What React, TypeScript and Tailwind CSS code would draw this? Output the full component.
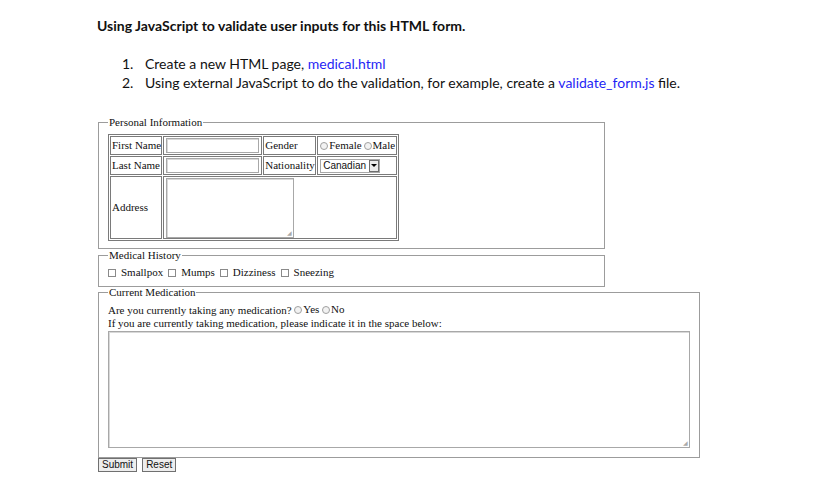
import React from "react"

const serif = { fontFamily: '"Liberation Serif", "Times New Roman", serif' }
const sans = { fontFamily: '"Liberation Sans", Arial, sans-serif' }

function Radio({ label }: { label: string }) {
  return (
    <span className="inline-flex items-center whitespace-nowrap">
      <span className="mr-[1px] inline-block h-[8px] w-[8px] rounded-full border border-[#a0a0a0] bg-[#f2f2f2]" />
      {label}
    </span>
  )
}

function Check({ label }: { label: string }) {
  return (
    <span className="mr-[5px] inline-flex items-center">
      <span className="mr-[5px] inline-block h-[8px] w-[8px] border border-[#8a8a8a] bg-white" />
      {label}
    </span>
  )
}

function TextBox() {
  return <span className="block h-[15px] w-[93px] border border-[#a8a8a8] bg-white shadow-[inset_1px_1px_0_#d8d8d8]" />
}

function Grip() {
  return <span className="absolute bottom-[1px] right-[1px] text-[6px] leading-none text-[#aaa]">◢</span>
}

export default function App() {
  const td = "whitespace-nowrap border border-[#7a7a7a] p-0 align-middle"
  return (
    <div className="min-h-[484px] w-[828px] bg-white pl-[97px] pt-[17px] text-[#111]">
      <h1 className="text-[14px] font-bold leading-[18px]" style={{ fontFamily: "Lato, sans-serif" }}>
        Using JavaScript to validate user inputs for this HTML form.
      </h1>

      <ol className="mt-[20px] space-y-[1px] text-[14px] leading-[18px]" style={{ fontFamily: "Lato, sans-serif" }}>
        <li className="flex">
          <span className="ml-[25px] w-[23px]">1.</span>
          <span>
            Create a new HTML page, <span className="text-[#1f1ff5]">medical.html</span>
          </span>
        </li>
        <li className="flex">
          <span className="ml-[25px] w-[23px]">2.</span>
          <span>
            Using external JavaScript to do the validation, for example, create a{" "}
            <span className="text-[#1f1ff5]">validate_form.js</span> file.
          </span>
        </li>
      </ol>

      <form className="mt-[24px] text-[11px] leading-[13px]" style={serif}>
        <fieldset className="ml-[1px] w-[507px] border border-[#9c9c9c] px-[9px] pb-[7px]">
          <legend className="px-[1px]">Personal Information</legend>
          <table className="mt-[5px] table-fixed border-separate border-spacing-[1px] border border-[#7a7a7a]">
            <tbody>
              <tr className="h-[19px]">
                <td className={td + " w-[50px] pl-[1px]"}>First Name</td>
                <td className={td + " w-[96px] px-[2px]"}>
                  <TextBox />
                </td>
                <td className={td + " w-[53px] pl-[1px]"}>Gender</td>
                <td className={td + " w-[80px] pl-[2px]"}>
                  <span className="flex gap-[2px]">
                    <Radio label="Female" />
                    <Radio label="Male" />
                  </span>
                </td>
              </tr>
              <tr className="h-[19px]">
                <td className={td + " pl-[1px]"}>Last Name</td>
                <td className={td + " px-[2px]"}>
                  <TextBox />
                </td>
                <td className={td + " pl-[1px]"}>Nationality</td>
                <td className={td + " pl-[2px]"}>
                  <span className="inline-flex h-[14px] items-center border border-[#a8a8a8] bg-white pl-[2px] text-[10px]" style={sans}>
                    Canadian
                    <span className="ml-[3px] flex h-[12px] w-[10px] items-center justify-center border border-[#6e6e6e] bg-[#ececec]">
                      <span className="border-x-[3px] border-t-[3px] border-x-transparent border-t-black" />
                    </span>
                  </span>
                </td>
              </tr>
              <tr className="h-[63px]">
                <td className={td + " pl-[1px]"}>Address</td>
                <td className={td + " px-[2px]"} colSpan={3}>
                  <span className="relative block h-[60px] w-[128px] border border-[#a8a8a8] bg-white shadow-[inset_1px_1px_0_#d8d8d8]">
                    <Grip />
                  </span>
                </td>
              </tr>
            </tbody>
          </table>
        </fieldset>

        <fieldset className="ml-[1px] w-[507px] border border-[#9c9c9c] px-[9px] pb-[7px]">
          <legend className="px-[1px]">Medical History</legend>
          <div className="mt-[4px] flex items-center">
            <Check label="Smallpox" />
            <Check label="Mumps" />
            <Check label="Dizziness" />
            <Check label="Sneezing" />
          </div>
        </fieldset>

        <fieldset className="-mt-[1px] ml-[1px] w-[601px] border border-[#9c9c9c] px-[9px] pb-[9px]">
          <legend className="px-[1px]">Current Medication</legend>
          <div className="mt-[4px]">
            Are you currently taking any medication? <Radio label="Yes" /> <Radio label="No" />
          </div>
          <div>If you are currently taking medication, please indicate it in the space below:</div>
          <span className="relative mt-[1px] block h-[117px] w-[582px] border border-[#a8a8a8] bg-white shadow-[inset_1px_1px_0_#d8d8d8]">
            <Grip />
          </span>
        </fieldset>

        <div className="ml-[1px] flex gap-[5px] text-[10px]" style={sans}>
          <button type="button" className="h-[14px] border border-[#707070] bg-[#ededed] px-[3px] leading-[12px]">Submit</button>
          <button type="button" className="h-[14px] border border-[#707070] bg-[#ededed] px-[3px] leading-[12px]">Reset</button>
        </div>
      </form>
    </div>
  )
}
